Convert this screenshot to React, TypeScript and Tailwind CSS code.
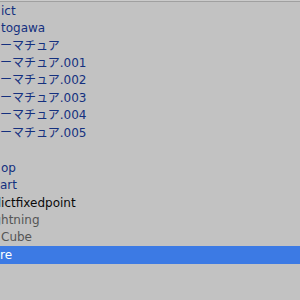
const rows: { text: string; tone: "prefab" | "normal" | "disabled" | "selected" | "empty"; shift?: string }[] = [
  { text: "ict", tone: "prefab", shift: "pl-[1px]" },
  { text: "togawa", tone: "prefab", shift: "pl-[1px]" },
  { text: "ーマチュア", tone: "prefab" },
  { text: "ーマチュア.001", tone: "prefab" },
  { text: "ーマチュア.002", tone: "prefab" },
  { text: "ーマチュア.003", tone: "prefab" },
  { text: "ーマチュア.004", tone: "prefab" },
  { text: "ーマチュア.005", tone: "prefab" },
  { text: "", tone: "empty" },
  { text: "op", tone: "prefab", shift: "pl-[1px]" },
  { text: "art", tone: "prefab" },
  { text: "dictfixedpoint", tone: "normal", shift: "-ml-[6.5px]" },
  { text: "Lightning", tone: "disabled", shift: "-ml-[16.6px]" },
  { text: "Cube", tone: "disabled", shift: "pl-[1px]" },
  { text: "re", tone: "selected" },
];

const toneClass = {
  prefab: "text-[#14307f]",
  normal: "text-[#0a0a0a]",
  disabled: "text-[#555555]",
  selected: "text-white bg-[#3c7ae4]",
  empty: "",
};

export default function App() {
  return (
    <div className="w-[300px] h-[300px] overflow-hidden bg-[#c2c2c2] font-['DejaVu_Sans','Noto_Sans_CJK_JP',sans-serif] text-[12px]">
      <div className="h-px bg-[#cbcbcb]" />
      <div className="h-px bg-[#a0a0a0]" />
      <ul>
        {rows.map((r, i) => (
          <li key={i} className={`h-[17.45px] flex items-center whitespace-nowrap overflow-hidden ${toneClass[r.tone]}`}>
            <span className={r.shift ?? ""}>{r.text}</span>
          </li>
        ))}
      </ul>
    </div>
  );
}
